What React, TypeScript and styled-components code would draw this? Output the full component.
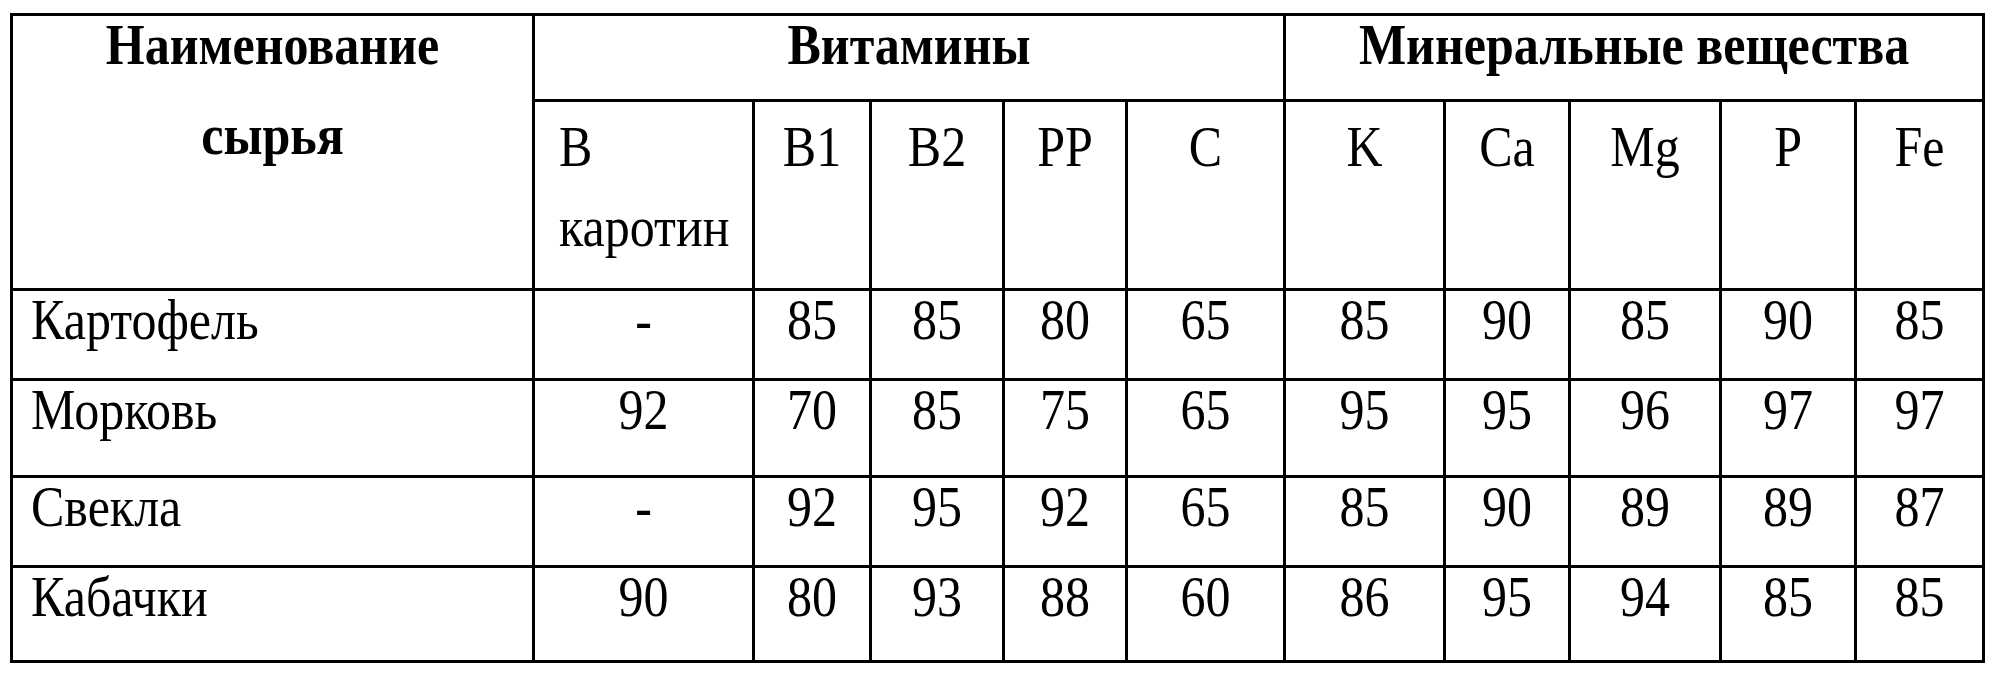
import styled, { createGlobalStyle } from "styled-components";

const GlobalStyle = createGlobalStyle`
  html, body {
    margin: 0;
    background: #fff;
  }
  body {
    font-family: "Liberation Serif", "Times New Roman", serif;
    color: #000;
  }
`;

const columns = [522, 220, 117, 133, 123, 158, 160, 125, 151, 135, 128];

const vitamins = ["B1", "B2", "PP", "C"];
const minerals = ["K", "Ca", "Mg", "P", "Fe"];

const rows = [
  { name: "Картофель", h: 90, values: ["-", "85", "85", "80", "65", "85", "90", "85", "90", "85"] },
  { name: "Морковь", h: 97, values: ["92", "70", "85", "75", "65", "95", "95", "96", "97", "97"] },
  { name: "Свекла", h: 90, values: ["-", "92", "95", "92", "65", "85", "90", "89", "89", "87"] },
  { name: "Кабачки", h: 95, values: ["90", "80", "93", "88", "60", "86", "95", "94", "85", "85"] },
];

const Page = styled.div`
  padding: 13px 0 0 10px;
`;

const Table = styled.table`
  width: 1974px;
  table-layout: fixed;
  border-collapse: collapse;
  border: 3px solid #000;
  font-size: 50px;
  line-height: 58px;
`;

const Row = styled.tr<{ $h: number }>`
  height: ${(p) => p.$h}px;
`;

const HeadCell = styled.th`
  border: 3px solid #000;
  padding: 0;
  font-weight: bold;
  text-align: center;
  vertical-align: top;
`;

const SubHead = styled.td<{ $align?: string; $pad?: number }>`
  border: 3px solid #000;
  padding: 5px 0 0 ${(p) => p.$pad || 0}px;
  text-align: ${(p) => p.$align || "center"};
  vertical-align: top;
  line-height: 80px;
`;

const Cell = styled.td<{ $align?: string; $pad?: number }>`
  border: 3px solid #000;
  padding: 0 0 0 ${(p) => p.$pad || 0}px;
  text-align: ${(p) => p.$align || "center"};
  vertical-align: top;
`;

const Line = styled.span<{ $gap?: number }>`
  display: block;
  margin-top: ${(p) => p.$gap || 0}px;
`;

// the scan is a little taller than the font, so stretch the glyphs
const Text = styled.span`
  display: inline-block;
  transform: scaleY(1.12);
`;

export default function App() {
  return (
    <Page>
      <GlobalStyle />
      <Table>
        <colgroup>
          {columns.map((w, i) => (
            <col key={i} style={{ width: w }} />
          ))}
        </colgroup>
        <thead>
          <Row $h={86}>
            <HeadCell rowSpan={2}>
              <Line>
                <Text>Наименование</Text>
              </Line>
              <Line $gap={32}>
                <Text>сырья</Text>
              </Line>
            </HeadCell>
            <HeadCell colSpan={5}>
              <Text>Витамины</Text>
            </HeadCell>
            <HeadCell colSpan={5}>
              <Text>Минеральные вещества</Text>
            </HeadCell>
          </Row>
          <Row $h={189}>
            <SubHead $align="left" $pad={24}>
              <Text>B</Text>
              <br />
              <Text>каротин</Text>
            </SubHead>
            {vitamins.map((v) => (
              <SubHead key={v}>
                <Text>{v}</Text>
              </SubHead>
            ))}
            {minerals.map((m) => (
              <SubHead key={m}>
                <Text>{m}</Text>
              </SubHead>
            ))}
          </Row>
        </thead>
        <tbody>
          {rows.map((r) => (
            <Row key={r.name} $h={r.h}>
              <Cell $align="left" $pad={18}>
                <Text>{r.name}</Text>
              </Cell>
              {r.values.map((v, i) => (
                <Cell key={i}>
                  <Text>{v}</Text>
                </Cell>
              ))}
            </Row>
          ))}
        </tbody>
      </Table>
    </Page>
  );
}
